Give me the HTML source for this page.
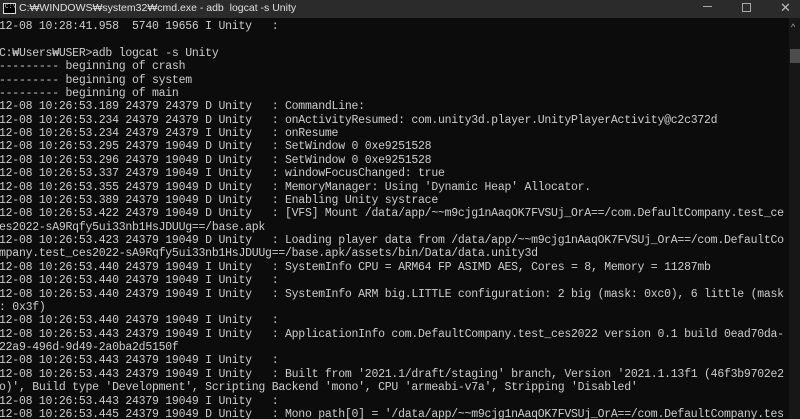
<!DOCTYPE html>
<html><head><meta charset="utf-8"><style>
html,body{margin:0;padding:0;width:800px;height:419px;overflow:hidden;background:#0c0c0c;}
#title{position:absolute;left:0;top:0;width:800px;height:18px;background:#2b2b2b;}
#title .t{position:absolute;left:19px;top:2px;font:10.5px "Liberation Sans","Noto Sans CJK KR",sans-serif;color:#e0e0e0;white-space:pre;}
#icon{position:absolute;left:3px;top:3px;width:11px;height:9px;border:1px solid #ddd;background:#000;}
#icon span{position:absolute;left:1px;top:0;font:6px "Liberation Mono",monospace;color:#ddd;line-height:6px}
pre{position:absolute;left:-1px;top:20px;width:790px;height:399px;margin:0;overflow:hidden;font:11.5px/13.38px "Liberation Mono","Noto Sans CJK KR",monospace;letter-spacing:-0.25px;color:#cccccc;}
#sb{position:absolute;left:789px;top:18px;width:11px;height:401px;background:#171717;}
#thumb{position:absolute;left:1px;top:31px;width:10px;height:14px;background:#4d4d4d;}
.ctl{position:absolute;top:0;color:#bbb;font:13px "Liberation Sans",sans-serif;}
</style></head><body>
<div id="title"><div id="icon"><span>C:\</span></div><div class="t">C:₩WINDOWS₩system32₩cmd.exe - adb  logcat -s Unity</div>
<div style="position:absolute;left:703px;top:6px;width:9px;height:1px;background:#aaa"></div>
<div style="position:absolute;left:742px;top:3px;width:7px;height:7px;border:1px solid #aaa"></div>
<div class="ctl" style="left:780px;top:0px">✕</div>
</div>
<pre>12-08 10:28:41.958  5740 19656 I Unity   :

C:₩Users₩USER&gt;adb logcat -s Unity
--------- beginning of crash
--------- beginning of system
--------- beginning of main
12-08 10:26:53.189 24379 24379 D Unity   : CommandLine:
12-08 10:26:53.234 24379 24379 D Unity   : onActivityResumed: com.unity3d.player.UnityPlayerActivity@c2c372d
12-08 10:26:53.234 24379 24379 I Unity   : onResume
12-08 10:26:53.295 24379 19049 D Unity   : SetWindow 0 0xe9251528
12-08 10:26:53.296 24379 19049 D Unity   : SetWindow 0 0xe9251528
12-08 10:26:53.337 24379 19049 I Unity   : windowFocusChanged: true
12-08 10:26:53.355 24379 19049 D Unity   : MemoryManager: Using 'Dynamic Heap' Allocator.
12-08 10:26:53.389 24379 19049 D Unity   : Enabling Unity systrace
12-08 10:26:53.422 24379 19049 D Unity   : [VFS] Mount /data/app/~~m9cjg1nAaqOK7FVSUj_OrA==/com.DefaultCompany.test_ce
es2022-sA9Rqfy5ui33nb1HsJDUUg==/base.apk
12-08 10:26:53.423 24379 19049 D Unity   : Loading player data from /data/app/~~m9cjg1nAaqOK7FVSUj_OrA==/com.DefaultCo
mpany.test_ces2022-sA9Rqfy5ui33nb1HsJDUUg==/base.apk/assets/bin/Data/data.unity3d
12-08 10:26:53.440 24379 19049 I Unity   : SystemInfo CPU = ARM64 FP ASIMD AES, Cores = 8, Memory = 11287mb
12-08 10:26:53.440 24379 19049 I Unity   :
12-08 10:26:53.440 24379 19049 I Unity   : SystemInfo ARM big.LITTLE configuration: 2 big (mask: 0xc0), 6 little (mask
: 0x3f)
12-08 10:26:53.440 24379 19049 I Unity   :
12-08 10:26:53.443 24379 19049 I Unity   : ApplicationInfo com.DefaultCompany.test_ces2022 version 0.1 build 0ead70da-
22a9-496d-9d49-2a0ba2d5150f
12-08 10:26:53.443 24379 19049 I Unity   :
12-08 10:26:53.443 24379 19049 I Unity   : Built from '2021.1/draft/staging' branch, Version '2021.1.13f1 (46f3b9702e2
o)', Build type 'Development', Scripting Backend 'mono', CPU 'armeabi-v7a', Stripping 'Disabled'
12-08 10:26:53.443 24379 19049 I Unity   :
12-08 10:26:53.445 24379 19049 D Unity   : Mono path[0] = '/data/app/~~m9cjg1nAaqOK7FVSUj_OrA==/com.DefaultCompany.tes</pre>
<div id="sb"><div style="position:absolute;left:2px;top:4px;color:#aaa;font:9px 'Liberation Sans',sans-serif">^</div><div id="thumb"></div></div>
</body></html>
